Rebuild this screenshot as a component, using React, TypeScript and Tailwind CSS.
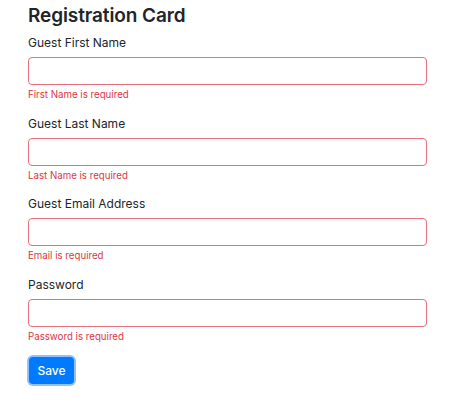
import React from "react";

const fields = [
  { label: "Guest First Name", error: "First Name is required", type: "text" },
  { label: "Guest Last Name", error: "Last Name is required", type: "text" },
  { label: "Guest Email Address", error: "Email is required", type: "email" },
  { label: "Password", error: "Password is required", type: "password" },
];

export default function App() {
  return (
    <div
      className="w-[474px] h-[412px] bg-white pl-[28px] pr-[47px] pt-[4px] text-[#212529]"
      style={{ fontFamily: "Inter, 'Liberation Sans', sans-serif" }}
    >
      <h4 className="text-[19px] leading-[24px] font-semibold tracking-[-0.1px]">Registration Card</h4>
      <form className="flex flex-col">
        {fields.map((f, i) => (
          <div key={f.label} className={i === 0 ? "mt-[6px]" : "mt-[13.6px]"}>
            <label className="block text-[12px] leading-[18px]">{f.label}</label>
            <input
              type={f.type}
              className="mt-[5px] block w-full h-[28px] rounded-[4px] border-[1.5px] border-[#e5707c] bg-white outline-none"
            />
            <div className="mt-[4px] text-[9.7px] leading-[12px] text-[#dc3545]">{f.error}</div>
          </div>
        ))}
        <div className="mt-[14px]">
          <button
            type="button"
            className="h-[27px] w-[45px] ml-[1px] rounded-[4px] bg-[#007bff] text-white text-[12px] font-medium ring-2 ring-[#8fc0ff]"
          >
            Save
          </button>
        </div>
      </form>
    </div>
  );
}
